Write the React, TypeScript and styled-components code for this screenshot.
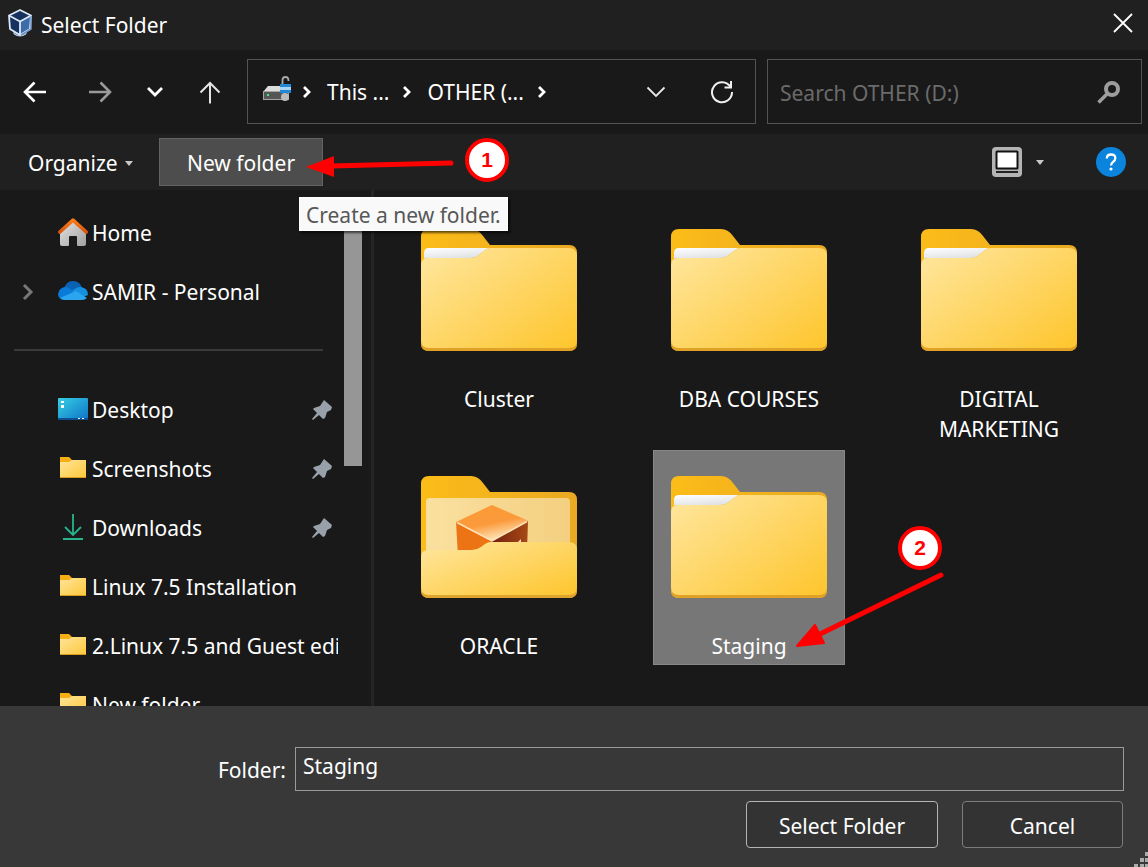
import React from 'react';
import styled, { createGlobalStyle } from 'styled-components';

const GlobalStyle = createGlobalStyle`
  *, *::before, *::after { box-sizing: border-box; }
  body { margin: 0; background: #191919; }
  button, input { font: inherit; color: inherit; }
  button { background: none; border: 0; padding: 0; cursor: pointer; }
  svg { display: block; flex: none; }
`;

const Dialog = styled.main`
  display: flex;
  flex-direction: column;
  height: 100vh;
  min-height: 480px;
  overflow: hidden;
  background: #191919;
  color: #fff;
  font-family: 'Noto Sans', 'Open Sans', sans-serif;
  font-size: 21px;
  line-height: 30px;
`;

const TitleBar = styled.header`
  display: flex;
  align-items: center;
  flex: none;
  height: 50px;
  padding: 0 14px 4px 6px;
  background: #202020;
`;

const Title = styled.h1`
  flex: 1;
  margin: 0 0 0 7px;
  padding-top: 3px;
  font-size: 21px;
  font-weight: 400;
`;

const NavBar = styled.div`
  display: flex;
  align-items: center;
  flex: none;
  height: 84px;
  padding: 0 6px 1px 5px;
`;

const NavButton = styled.button<{ $width: number }>`
  display: flex;
  align-items: center;
  justify-content: center;
  width: ${(p) => p.$width}px;
  height: 40px;
`;

const AddressBar = styled.nav`
  display: flex;
  align-items: center;
  flex: 471 1 0;
  height: 65px;
  margin-left: 2px;
  padding: 0 21px 0 15px;
  border: 1px solid #535353;
`;

const DriveSlot = styled.span`
  margin-right: 12px;
`;

const Crumb = styled.button`
  margin: 0 14px 0 16px;
  white-space: nowrap;
`;

const AddressActions = styled.div`
  display: flex;
  gap: 44px;
  align-items: center;
  margin-left: auto;
`;

const IconButton = styled.button`
  display: flex;
  align-items: center;
  justify-content: center;
`;

const SearchBox = styled.label`
  display: flex;
  align-items: center;
  flex: 341 1 0;
  height: 65px;
  margin-left: 11px;
  padding: 0 20px 0 12px;
  border: 1px solid #535353;
`;

const SearchInput = styled.input`
  flex: 1;
  min-width: 0;
  padding: 3px 0 0;
  border: 0;
  outline: 0;
  background: none;
  &::placeholder { color: #6b6b6b; opacity: 1; }
`;

const Toolbar = styled.div`
  display: flex;
  align-items: center;
  flex: none;
  height: 56px;
  padding: 0 22px 0 28px;
  background: #202020;
`;

const OrganizeButton = styled.button`
  display: flex;
  align-items: center;
  gap: 7px;
  width: 131px;
  padding-top: 2px;
`;

const NewFolderSlot = styled.div`
  position: relative;
  z-index: 2;
`;

const NewFolderButton = styled.button`
  display: block;
  width: 164px;
  height: 48px;
  padding-top: 2px;
  border: 1px solid #636363;
  background: #4d4d4d;
`;

const ToolbarRight = styled.div`
  display: flex;
  align-items: center;
  margin-left: auto;
`;

const ViewButton = styled.button`
  display: flex;
  align-items: center;
  gap: 14px;
  margin-right: 52px;
`;

const Tooltip = styled.div`
  position: absolute;
  top: 59px;
  left: 140px;
  height: 34px;
  padding: 2px 6px;
  border: 1px solid #fff;
  background: #f9f9f9;
  box-shadow: 2px 2px 2px #0009;
  color: #575757;
  white-space: nowrap;
`;

const StepBadge = styled.div<{ $left: number; $top: number }>`
  position: absolute;
  left: ${(p) => p.$left}px;
  top: ${(p) => p.$top}px;
  display: flex;
  align-items: center;
  justify-content: center;
  width: 44px;
  height: 44px;
  border: 4px solid #f00;
  border-radius: 50%;
  background: #fff;
  color: #f00;
  font-family: 'Liberation Sans', sans-serif;
  font-size: 21px;
  font-weight: 700;
`;

const StepArrow = styled.svg<{ $left: number; $top: number }>`
  position: absolute;
  left: ${(p) => p.$left}px;
  top: ${(p) => p.$top}px;
  pointer-events: none;
`;

const Body = styled.div`
  display: flex;
  flex: 1;
  min-height: 0;
`;

const Sidebar = styled.aside`
  display: flex;
  flex: none;
  width: 374px;
  overflow: hidden;
  border-right: 3px solid #252525;
`;

const Places = styled.nav`
  width: 338px;
  padding-top: 13px;
  overflow: hidden;
`;

const Place = styled.a`
  display: flex;
  align-items: center;
  height: 59px;
  padding-left: 22px;
  color: inherit;
  text-decoration: none;
  white-space: nowrap;
`;

const Expander = styled.span`
  display: flex;
  flex: none;
  width: 36px;
`;

const PlaceIcon = styled.span`
  display: flex;
  flex: none;
  justify-content: center;
  width: 30px;
  margin-right: 4px;
`;

const PlaceName = styled.span`
  flex: 1;
`;

const PinSlot = styled.span`
  margin-right: 6px;
`;

const Separator = styled.hr`
  height: 2px;
  margin: 28px 15px 29px 14px;
  border: 0;
  background: #3a3a3a;
`;

const ScrollTrack = styled.div`
  width: 18px;
  margin-left: 6px;
  padding-top: 34px;
`;

const ScrollThumb = styled.div`
  height: 242px;
  background: #969696;
`;

const Files = styled.section`
  flex: 1;
  min-width: 0;
`;

const FileGrid = styled.ul`
  display: grid;
  grid-template-columns: repeat(auto-fill, 250px);
  grid-auto-rows: 247px;
  align-items: start;
  justify-items: center;
  margin: 0;
  padding: 13px 0 0;
  list-style: none;
`;

const FileItem = styled.li`
  position: relative;
`;

const FileTile = styled.button<{ $selected?: boolean }>`
  display: flex;
  flex-direction: column;
  align-items: center;
  gap: 33px;
  width: 192px;
  min-height: 215px;
  padding: 25px 18px 1px;
  border: 1px solid ${(p) => (p.$selected ? '#888' : 'transparent')};
  background: ${(p) => (p.$selected ? '#777' : 'transparent')};
`;

const Footer = styled.form`
  position: relative;
  flex: none;
  height: 161px;
  padding: 41px 24px 0 20px;
  background: #383838;
`;

const FieldRow = styled.div`
  display: flex;
  align-items: center;
`;

const FieldLabel = styled.label`
  width: 266px;
  margin-right: 9px;
  padding-top: 2px;
  text-align: right;
`;

const FolderInput = styled.input`
  flex: 1;
  min-width: 0;
  height: 44px;
  padding: 0 7px 6px;
  border: 1px solid #9a9a9a;
  border-radius: 0;
  outline: 0;
  background: #383838;
`;

const Actions = styled.div`
  display: flex;
  justify-content: flex-end;
  gap: 24px;
  padding: 10px 1px 0 0;
`;

const ActionButton = styled.button<{ $primary?: boolean }>`
  width: ${(p) => (p.$primary ? 192 : 161)}px;
  height: 47px;
  padding-top: 2px;
  border: 1px solid ${(p) => (p.$primary ? '#b4b4b4' : '#7c7c7c')};
  border-radius: 4px;
  background: #333;
`;

const ResizeGrip = styled.svg`
  position: absolute;
  right: 0;
  bottom: 0;
`;

const VirtualBoxIcon = () => (
  <svg width="28" height="30" viewBox="0 0 28 30">
    <path d="M8 23v3q6 4 12 0v-3z" fill="#5f86b4" stroke="#c3d4e8" />
    <path d="M14 2 25 7.500 24 21 14 27 4 21 3 7.500z" fill="#16315f" />
    <path d="M14 14 25 7.500 24 21 14 27z" fill="#3d6ca8" />
    <path d="M14 2 25 7.500 24 21 14 27 4 21 3 7.500zM3 7.500l11 6 11-6M14 13.500V27" fill="none" stroke="#dce8f4" strokeWidth="1.800" strokeLinejoin="round" />
    <path d="M25 8v13l-10 6" fill="none" stroke="#6f97c9" strokeWidth="1.500" />
  </svg>
);

const ArrowLeft = () => (
  <svg width="24" height="24" viewBox="0 0 24 24" fill="none" stroke="#fff" strokeWidth="2.600">
    <path d="M23 12H2M11.500 2.500 2 12l9.500 9.500" />
  </svg>
);

const ArrowRight = () => (
  <svg width="24" height="24" viewBox="0 0 24 24" fill="none" stroke="#9a9a9a" strokeWidth="2.600">
    <path d="M1 12h21M12.500 2.500 22 12l-9.500 9.500" />
  </svg>
);

const ArrowUp = () => (
  <svg width="22" height="24" viewBox="0 0 22 24" fill="none" stroke="#e4e4e4" strokeWidth="2">
    <path d="M11 23.500V3M1.500 12.500 11 3l9.500 9.500" />
  </svg>
);

const RecentChevron = () => (
  <svg width="18" height="12" viewBox="0 0 18 12" fill="none" stroke="#fff" strokeWidth="2.800">
    <path d="m2 2 7 7 7-7" />
  </svg>
);

const CrumbChevron = () => (
  <svg width="8" height="14" viewBox="0 0 8 14" fill="none" stroke="#fff" strokeWidth="2.800">
    <path d="m1 2 5 5-5 5" />
  </svg>
);

const DriveIcon = () => (
  <svg width="28" height="32" viewBox="0 0 28 32">
    <path d="m5 10-5 6h26l-3-6z" fill="#dcdcdc" />
    <path d="M0 15h26v9H0z" fill="#a4a4a4" />
    <path d="M1 16h24v7H1z" fill="#555" />
    <path d="M4 18h2v2H4z" fill="#3ee88c" />
    <path d="M19.500 9V4q0-3 3-3t3 4" fill="none" stroke="#aaa" strokeWidth="1.800" />
    <circle cx="22" cy="21" r="4" fill="#bcbcbc" />
    <path d="M17 8h11v9H17z" fill="#a9d6f2" />
    <path d="M17 8h11v3H17zM17 14h11v3H17z" fill="#2388d4" />
  </svg>
);

const DownChevron = () => (
  <svg width="20" height="12" viewBox="0 0 20 12" fill="none" stroke="#e8e8e8" strokeWidth="1.800">
    <path d="m1.500 1.500 8.500 8.500 8.500-8.500" />
  </svg>
);

const RefreshIcon = () => (
  <svg width="24" height="24" viewBox="0 0 24 24" fill="none" stroke="#f0f0f0" strokeWidth="2">
    <path d="M20.500 7A10 10 0 1 0 22 12" />
    <path d="M21 1v6.500H14.500" />
  </svg>
);

const SearchIcon = () => (
  <svg width="24" height="24" viewBox="0 0 24 24" fill="none" stroke="#9d9d9d">
    <circle cx="15" cy="9" r="6" strokeWidth="4" />
    <path d="m10.500 13.500-9 9" strokeWidth="3.600" />
  </svg>
);

const CloseIcon = () => (
  <svg width="22" height="20" viewBox="0 0 22 20" fill="none" stroke="#fff" strokeWidth="1.800">
    <path d="m2 1 18 18M20 1 2 19" />
  </svg>
);

const Caret = () => (
  <svg width="8" height="5" viewBox="0 0 8 5">
    <path d="M0 0h8L4 5z" fill="#c8c8c8" />
  </svg>
);

const ViewIcon = () => (
  <svg width="30" height="30" viewBox="0 0 30 30">
    <rect width="30" height="30" rx="4" fill="#b4b4b4" />
    <rect x="3.500" y="3.500" width="23" height="19" rx="1.500" fill="#111" />
    <rect x="5.500" y="5.500" width="19" height="15" fill="#fff" />
    <path d="M4 25h22" stroke="#222" strokeWidth="2" />
  </svg>
);

const HelpIcon = () => (
  <svg width="30" height="30" viewBox="0 0 30 30">
    <circle cx="15" cy="15" r="15" fill="#0a84dc" />
    <path d="M10.800 11.500q0-4 4.300-4t4.200 3.700q0 2-2.200 3.700-2 1.500-2 3.600" fill="none" stroke="#fff" strokeWidth="2.300" />
    <circle cx="15" cy="22" r="1.600" fill="#fff" />
  </svg>
);

const HomeIcon = () => (
  <svg width="30" height="30" viewBox="0 0 30 30">
    <defs>
      <linearGradient id="wall" x2="1" y2="1"><stop stopColor="#e4e4e4" /><stop offset="1" stopColor="#a0a0a0" /></linearGradient>
      <linearGradient id="roof" x2="0" y2="1"><stop stopColor="#fb7b18" /><stop offset="1" stopColor="#d9560c" /></linearGradient>
    </defs>
    <path d="M2 13 15 2l13 11v13q0 2-2 2h-6q-1 0-1-1v-8q0-1-1-1h-6q-1 0-1 1v8q0 1-1 1H4q-2 0-2-2z" fill="url(#wall)" />
    <path d="M1.800 14 15 2.200 28.200 14" fill="none" stroke="url(#roof)" strokeWidth="3.600" strokeLinecap="round" strokeLinejoin="round" />
  </svg>
);

const CloudIcon = () => (
  <svg width="30" height="22" viewBox="0 0 30 22">
    <path d="M6 8q2-8 9-8 7 0 9 7l-4 7z" fill="#0b62b4" />
    <path d="M6 19q-6-1-6-6 1-6 7-7 4 0 7 3l8 5-10 5z" fill="#0a7ad8" />
    <path d="M14 10q4-4 9-4 7 1 7 8l-7 3z" fill="#1490df" />
    <path d="m2 17 16-7 11 7q-2 2-5 2H7q-3 0-5-2z" fill="#2aa5ee" />
  </svg>
);

const DesktopIcon = () => (
  <svg width="30" height="24" viewBox="0 0 30 24">
    <defs><linearGradient id="screen" x2="1" y2="1"><stop stopColor="#35d0e4" /><stop offset="1" stopColor="#0f72c8" /></linearGradient></defs>
    <rect width="30" height="22" rx="1" fill="url(#screen)" />
    <path d="M3 3h3v2H3zM3 7h3v3H3z" fill="#fff" />
    <path d="M0 20h30v2H0z" fill="#0b4f94" />
    <path d="M20 20h2v1h-2zM24 20h2v1h-2z" fill="#fff" />
  </svg>
);

const DownloadIcon = () => (
  <svg width="20" height="28" viewBox="0 0 20 28" fill="none" stroke="#27b48c" strokeWidth="1.800">
    <path d="M10 0v21M2 13l8 8 8-8M0 25h20" />
  </svg>
);

const SmallFolderIcon = () => (
  <svg width="26" height="24" viewBox="0 0 26 24">
    <defs><linearGradient id="small" x2="1" y2="1"><stop stopColor="#ffe49a" /><stop offset="1" stopColor="#fdc93c" /></linearGradient></defs>
    <path d="M0 0h9l3 3h14v18H0z" fill="#f5ae14" />
    <path d="M0 5h9l3-2h14v17H0z" fill="url(#small)" />
    <path d="M0 20h26v1H0z" fill="#d99b1b" />
  </svg>
);

const PinIcon = () => (
  <svg width="20" height="20" viewBox="0 0 20 20">
    <path d="m12 0 8 7-1 3-4 2-2 6-2 1-4-4-6 5-1-1 5-6-4-4 1-1 6-2z" fill="#98a1a9" />
  </svg>
);

const PlaceChevron = () => (
  <svg width="12" height="18" viewBox="0 0 12 18" fill="none" stroke="#777" strokeWidth="3">
    <path d="m2 2 7 7-7 7" />
  </svg>
);

const FolderGradients = () => (
  <defs>
    <linearGradient id="front" x1="0" y1="0" x2="1" y2="0.900"><stop stopColor="#ffe7a0" /><stop offset="1" stopColor="#fec732" /></linearGradient>
    <linearGradient id="back" x2="1"><stop stopColor="#fcbc18" /><stop offset="1" stopColor="#e9a922" /></linearGradient>
    <linearGradient id="paper" x2="0.300" y2="1"><stop stopColor="#fff" /><stop offset="1" stopColor="#d6dade" /></linearGradient>
    <linearGradient id="sheet" x2="1"><stop stopColor="#fae0a0" /><stop offset="1" stopColor="#f3cf80" /></linearGradient>
    <linearGradient id="cubeTop" x2="0.400" y2="1"><stop stopColor="#fb9a32" /><stop offset="0.600" stopColor="#fb9a3c" /><stop offset="1" stopColor="#ffe2b4" /></linearGradient>
    <linearGradient id="cubeSide" x2="1"><stop stopColor="#741f10" /><stop offset="1" stopColor="#a84a14" /></linearGradient>
  </defs>
);

const FOLDER_BACK = 'M0 8Q0 0 8 0h42q7 0 12 7l7 9h79q8 0 8 8v90q0 8-8 8H8q-8 0-8-8z';

const FolderIcon = () => (
  <svg width="156" height="122" viewBox="0 0 156 122">
    <FolderGradients />
    <path d={FOLDER_BACK} fill="url(#back)" />
    <path d="M3 34V24q0-5 5-5h61L54 33z" fill="url(#paper)" />
    <path d="M0 36q0-7 7-7h42q6 0 10-4l4-3q3-3 6-3h79q8 0 8 8v87q0 8-8 8H8q-8 0-8-8z" fill="#e0a126" />
    <path d="M0 36q0-7 7-7h42q6 0 10-4l4-3q3-3 6-3h79q8 0 8 8v84q0 8-8 8H8q-8 0-8-8z" fill="url(#front)" />
  </svg>
);

const OpenFolderIcon = () => (
  <svg width="156" height="122" viewBox="0 0 156 122">
    <FolderGradients />
    <path d={FOLDER_BACK} fill="url(#back)" />
    <path d="M5 80V26q0-4 4-4h136q4 0 4 4v54z" fill="url(#sheet)" />
    <path d="m35 46 36 19v15H37z" fill="#ec7414" />
    <path d="m71 65 36-20-1 30H71z" fill="url(#cubeSide)" />
    <path d="m71 29 36 15.500L71 65 35 46z" fill="url(#cubeTop)" />
    <path d="m36 46.500 35 18.500 35-19.500" fill="none" stroke="#ffe3b8" strokeWidth="1.500" />
    <path d="m95 68 5-5v5z" fill="#f3dcd2" />
    <path d="M0 81q0-7 7-7h44q5 0 9-3l4-3q3-2 6-2h78q8 0 8 8v40q0 8-8 8H8q-8 0-8-8z" fill="#dfa42e" />
    <path d="M0 81q0-7 7-7h44q5 0 9-3l4-3q3-2 6-2h78q8 0 8 8v37q0 8-8 8H8q-8 0-8-8z" fill="url(#front)" />
  </svg>
);

type PlaceData = { name: string; icon: React.ReactNode; pinned?: boolean; expandable?: boolean };

const topPlaces: PlaceData[] = [
  { name: 'Home', icon: <HomeIcon /> },
  { name: 'SAMIR - Personal', icon: <CloudIcon />, expandable: true },
];

const quickPlaces: PlaceData[] = [
  { name: 'Desktop', icon: <DesktopIcon />, pinned: true },
  { name: 'Screenshots', icon: <SmallFolderIcon />, pinned: true },
  { name: 'Downloads', icon: <DownloadIcon />, pinned: true },
  { name: 'Linux 7.5 Installation', icon: <SmallFolderIcon /> },
  { name: '2.Linux 7.5 and Guest edi', icon: <SmallFolderIcon /> },
  { name: 'New folder', icon: <SmallFolderIcon /> },
];

const folders = [
  { name: 'Cluster' },
  { name: 'DBA COURSES' },
  { name: 'DIGITAL MARKETING' },
  { name: 'ORACLE', open: true },
  { name: 'Staging', selected: true },
];

const PlaceRow = ({ place }: { place: PlaceData }) => (
  <Place href="#">
    <Expander>{place.expandable && <PlaceChevron />}</Expander>
    <PlaceIcon>{place.icon}</PlaceIcon>
    <PlaceName>{place.name}</PlaceName>
    {place.pinned && <PinSlot><PinIcon /></PinSlot>}
  </Place>
);

export default function App() {
  return (
    <Dialog>
      <GlobalStyle />
      <TitleBar>
        <VirtualBoxIcon />
        <Title>Select Folder</Title>
        <IconButton aria-label="Close"><CloseIcon /></IconButton>
      </TitleBar>

      <NavBar>
        <NavButton $width={60} aria-label="Back"><ArrowLeft /></NavButton>
        <NavButton $width={70} aria-label="Forward"><ArrowRight /></NavButton>
        <NavButton $width={40} aria-label="Recent locations"><RecentChevron /></NavButton>
        <NavButton $width={70} aria-label="Up"><ArrowUp /></NavButton>
        <AddressBar aria-label="Address">
          <DriveSlot><DriveIcon /></DriveSlot>
          <CrumbChevron />
          <Crumb>This ...</Crumb>
          <CrumbChevron />
          <Crumb>OTHER (...</Crumb>
          <CrumbChevron />
          <AddressActions>
            <IconButton aria-label="Previous locations"><DownChevron /></IconButton>
            <IconButton aria-label="Refresh"><RefreshIcon /></IconButton>
          </AddressActions>
        </AddressBar>
        <SearchBox>
          <SearchInput aria-label="Search" placeholder="Search OTHER (D:)" />
          <SearchIcon />
        </SearchBox>
      </NavBar>

      <Toolbar>
        <OrganizeButton>Organize <Caret /></OrganizeButton>
        <NewFolderSlot>
          <NewFolderButton>New folder</NewFolderButton>
          <Tooltip role="tooltip">Create a new folder.</Tooltip>
          <StepArrow $left={146} $top={16} width="152" height="26" viewBox="0 0 152 26">
            <path d="M26 12 146 9" stroke="#f00" strokeWidth="5" strokeLinecap="round" />
            <path d="M1 13 29 2v21z" fill="#f00" />
          </StepArrow>
          <StepBadge $left={306} $top={0}>1</StepBadge>
        </NewFolderSlot>
        <ToolbarRight>
          <ViewButton aria-label="Change view"><ViewIcon /><Caret /></ViewButton>
          <IconButton aria-label="Help"><HelpIcon /></IconButton>
        </ToolbarRight>
      </Toolbar>

      <Body>
        <Sidebar>
          <Places aria-label="Places">
            {topPlaces.map((place) => <PlaceRow key={place.name} place={place} />)}
            <Separator />
            {quickPlaces.map((place) => <PlaceRow key={place.name} place={place} />)}
          </Places>
          <ScrollTrack><ScrollThumb /></ScrollTrack>
        </Sidebar>
        <Files aria-label="Folders">
          <FileGrid>
            {folders.map((folder) => (
              <FileItem key={folder.name}>
                <FileTile $selected={folder.selected}>
                  {folder.open ? <OpenFolderIcon /> : <FolderIcon />}
                  <span>{folder.name}</span>
                </FileTile>
                {folder.selected && (
                  <>
                    <StepArrow $left={141} $top={118} width="156" height="84" viewBox="0 0 156 84">
                      <path d="M147 7 24 67" stroke="#f00" strokeWidth="5" strokeLinecap="round" />
                      <path d="m3 78 18-21 9 18z" fill="#f00" stroke="#f00" strokeWidth="2" strokeLinejoin="round" />
                    </StepArrow>
                    <StepBadge $left={245} $top={76}>2</StepBadge>
                  </>
                )}
              </FileItem>
            ))}
          </FileGrid>
        </Files>
      </Body>

      <Footer onSubmit={(event) => event.preventDefault()}>
        <FieldRow>
          <FieldLabel htmlFor="folder">Folder:</FieldLabel>
          <FolderInput id="folder" defaultValue="Staging" />
        </FieldRow>
        <Actions>
          <ActionButton $primary type="submit">Select Folder</ActionButton>
          <ActionButton type="button">Cancel</ActionButton>
        </Actions>
        <ResizeGrip width="14" height="15" viewBox="0 0 14 15">
          <path d="M11 0h3v4h-3zM6 6h4v4H6zM11 6h3v4h-3zM0 12h4v3H0zM6 12h4v3H6zM11 12h3v3h-3z" fill="#aaa" />
        </ResizeGrip>
      </Footer>
    </Dialog>
  );
}
